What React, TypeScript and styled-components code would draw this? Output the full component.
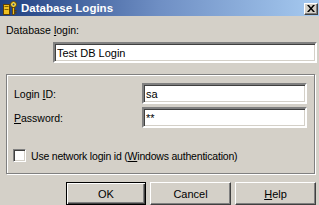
import React from 'react';
import styled, { createGlobalStyle } from 'styled-components';

const GlobalStyle = createGlobalStyle`
  html, body {
    margin: 0;
    padding: 0;
    background: #d4d0c8;
  }
  body {
    font-family: "Liberation Sans", Arial, sans-serif;
    font-size: 10.5px;
    color: #000;
  }
`;

function KeysIcon() {
  return (
    <svg width="15" height="14" viewBox="0 0 15 14">
      <rect x="0.5" y="3.5" width="6" height="10" fill="#f0c020" stroke="#604000" />
      <rect x="1.5" y="5" width="4" height="1" fill="#806000" />
      <rect x="1.5" y="8" width="4" height="1" fill="#806000" />
      <circle cx="10.5" cy="3.5" r="3" fill="#f8d840" stroke="#604000" />
      <circle cx="10.5" cy="3.5" r="1" fill="#2a4b8c" />
      <rect x="9.5" y="6.5" width="2" height="7" fill="#f0c020" stroke="#604000" strokeWidth="0.8" />
      <rect x="11.5" y="9" width="2" height="1.2" fill="#604000" />
      <rect x="11.5" y="11.3" width="2" height="1.2" fill="#604000" />
    </svg>
  );
}

function Key({ children }: { children: string }) {
  return <U>{children}</U>;
}

export default function App() {
  return (
    <Window>
      <GlobalStyle />
      <TitleBar>
        <KeysIcon />
        <Title>Database Logins</Title>
        <CloseButton>
          <svg width="8" height="7" viewBox="0 0 8 7">
            <path d="M0 0h2l2 2.5L6 0h2L5 3.5 8 7H6L4 4.5 2 7H0l3-3.5z" fill="#000" />
          </svg>
        </CloseButton>
      </TitleBar>
      <Body>
        <Label>
          Database <Key>l</Key>ogin:
        </Label>
        <NameInput defaultValue="Test DB Login" />
        <Group>
          <FieldRow>
            <FieldLabel>
              Login <Key>I</Key>D:
            </FieldLabel>
            <FieldInput defaultValue="sa" />
          </FieldRow>
          <FieldRow>
            <FieldLabel>
              <Key>P</Key>assword:
            </FieldLabel>
            <FieldInput defaultValue="**" />
          </FieldRow>
          <CheckRow>
            <CheckBox />
            <CheckText>
              Use network login id (<Key>W</Key>indows authentication)
            </CheckText>
          </CheckRow>
        </Group>
        <ButtonBar>
          <Button $default>OK</Button>
          <Button>Cancel</Button>
          <Button>
            <Key>H</Key>elp
          </Button>
        </ButtonBar>
      </Body>
    </Window>
  );
}

const Window = styled.div`
  width: 319px;
  height: 205px;
  overflow: hidden;
  background: #d4d0c8;
  display: flex;
  flex-direction: column;
`;

const TitleBar = styled.div`
  height: 16px;
  flex-shrink: 0;
  display: flex;
  align-items: center;
  padding: 0 1px 0 3px;
  background: linear-gradient(to right, #1f3f80 0%, #6f8fc4 50%, #a6caf0 100%);
`;

const Title = styled.span`
  margin-left: 3px;
  flex: 1;
  color: #fff;
  font-weight: bold;
  font-size: 11.5px;
  line-height: 16px;
`;

const CloseButton = styled.div`
  width: 14px;
  height: 12px;
  margin-top: 1px;
  box-sizing: border-box;
  display: flex;
  align-items: center;
  justify-content: center;
  background: #d4d0c8;
  border: 1px solid;
  border-color: #fff #404040 #404040 #fff;
  box-shadow: inset -1px -1px 0 #808080;
`;

const Body = styled.div`
  display: flex;
  flex-direction: column;
  padding: 8px 3px 0 6px;
`;

const Label = styled.div`
  line-height: 13px;
`;

const U = styled.span`
  text-decoration: underline;
  text-underline-offset: 1px;
`;

const sunken = `
  box-sizing: border-box;
  height: 21px;
  border: 2px solid;
  border-color: #808080 #fff #fff #808080;
  box-shadow: inset 1px 1px 0 #404040, inset -1px -1px 0 #d4d0c8;
  background: #fff;
  font-family: "Liberation Sans", Arial, sans-serif;
  font-size: 11px;
  color: #000;
  padding: 0 2px;
  outline: none;
`;

const NameInput = styled.input`
  ${sunken}
  margin: 5px 0 0 47px;
  width: 264px;
`;

const Group = styled.div`
  margin-top: 11px;
  height: 100px;
  box-sizing: border-box;
  border: 1px solid #808080;
  box-shadow: 1px 1px 0 #fff, inset 1px 1px 0 #fff;
  margin-right: 1px;
  padding: 8px 0 0 6px;
  display: flex;
  flex-direction: column;
  gap: 3px;
`;

const FieldRow = styled.div`
  display: flex;
  align-items: center;
  padding-left: 1px;
`;

const FieldLabel = styled.span`
  width: 128px;
`;

const FieldInput = styled.input`
  ${sunken}
  width: 165px;
`;

const CheckRow = styled.label`
  display: flex;
  align-items: center;
  margin-top: 18px;
  gap: 5px;
`;

const CheckText = styled.span`
  letter-spacing: -0.2px;
`;

const CheckBox = styled.span`
  width: 13px;
  height: 13px;
  box-sizing: border-box;
  background: #fff;
  border: 1px solid;
  border-color: #808080 #fff #fff #808080;
  box-shadow: inset 1px 1px 0 #404040, inset -1px -1px 0 #d4d0c8;
`;

const ButtonBar = styled.div`
  display: flex;
  justify-content: flex-end;
  gap: 4px;
  margin-top: 8px;
`;

const Button = styled.button<{ $default?: boolean }>`
  width: ${(p) => (p.$default ? 80 : 81)}px;
  height: 23px;
  box-sizing: border-box;
  background: #d4d0c8;
  font-family: "Liberation Sans", Arial, sans-serif;
  font-size: 11px;
  color: #000;
  padding: 0;
  border: 1px solid;
  border-color: ${(p) => (p.$default ? '#000' : '#fff #404040 #404040 #fff')};
  box-shadow: ${(p) =>
    p.$default
      ? 'inset 1px 1px 0 #fff, inset -1px -1px 0 #404040, inset -2px -2px 0 #808080'
      : 'inset -1px -1px 0 #808080'};
`;
